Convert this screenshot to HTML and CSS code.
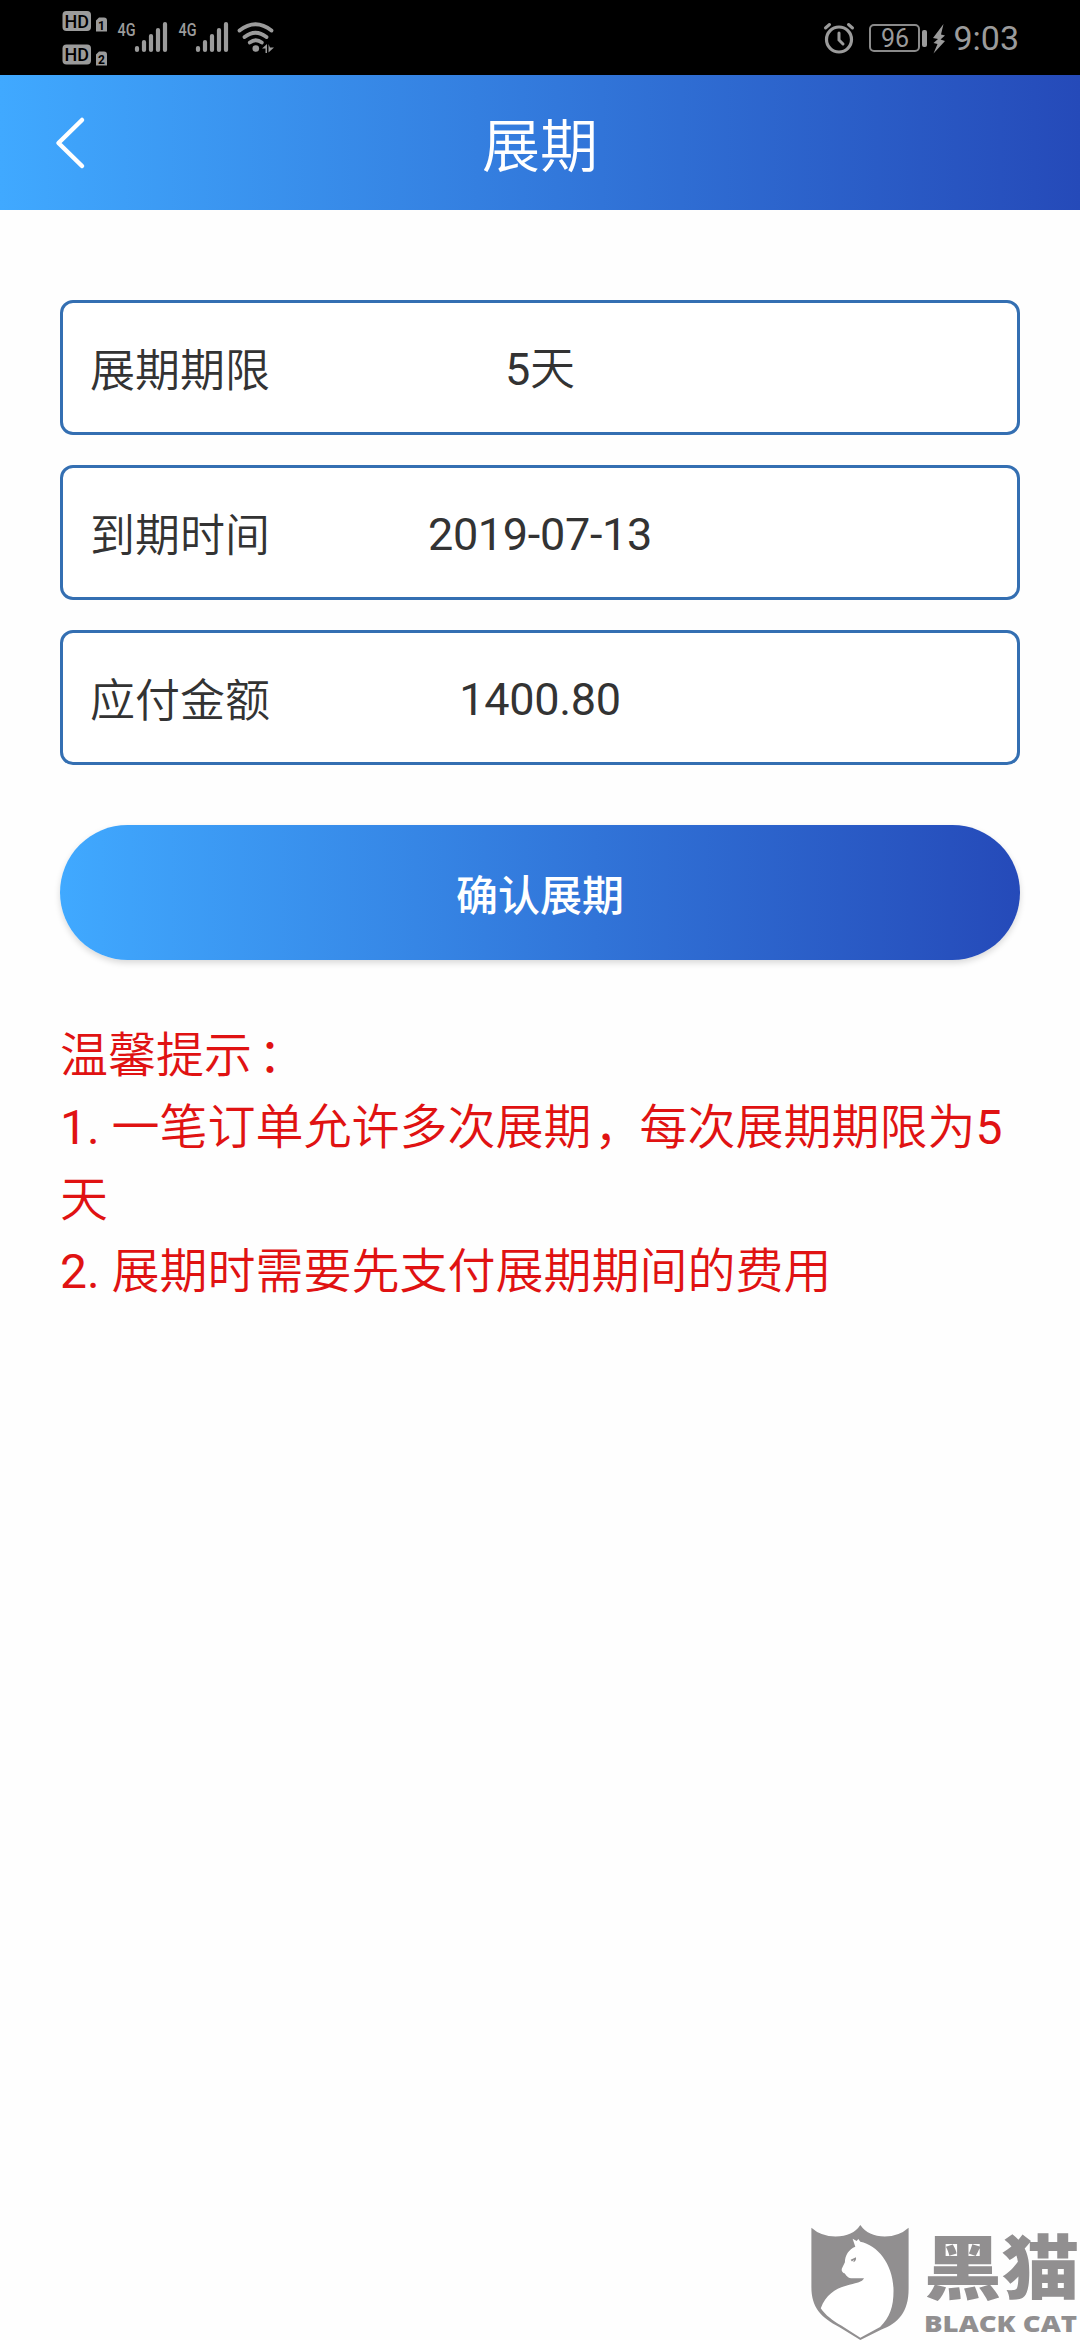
FILE: index.html
```html
<!DOCTYPE html>
<html lang="zh-CN">
<head>
<meta charset="utf-8">
<title>展期</title>
<link rel="stylesheet" href="styles.css">
</head>
<body>
<div class="screen">
  <div class="status">
    <svg class="status-left" width="216" height="75" viewBox="60 0 216 75" fill="#9b9b9b">
      <rect x="62.5" y="11" width="28.5" height="20" rx="4"/>
      <rect x="62.5" y="44.500" width="28.5" height="20" rx="4"/>
      <path d="M96 20.500l3-3h5a3 3 0 0 1 3 3v11h-11zM96 54.500l3-3h5a3 3 0 0 1 3 3v11h-11z"/>
      <g fill="#000" font-family="Roboto, sans-serif" font-weight="500">
        <text x="64.500" y="27.500" font-size="18.500" textLength="24.500" lengthAdjust="spacingAndGlyphs">HD</text>
        <text x="64.500" y="61" font-size="18.500" textLength="24.500" lengthAdjust="spacingAndGlyphs">HD</text>
        <text x="98" y="29.500" font-size="12" font-weight="700">1</text>
        <text x="98" y="63.500" font-size="12" font-weight="700">2</text>
      </g>
      <g font-family="Roboto, sans-serif" font-weight="500" font-size="19">
        <text x="117.500" y="35.500" textLength="18" lengthAdjust="spacingAndGlyphs">4G</text>
        <text x="178.500" y="35.500" textLength="18" lengthAdjust="spacingAndGlyphs">4G</text>
      </g>
      <g stroke="#9b9b9b" stroke-width="4.200" stroke-linecap="round">
        <path d="M137 48v2M144 42v8M151 36v14M158 30v20M165 24v26"/>
        <path d="M198 48v2M205 42v8M212 36v14M219 30v20M226 24v26"/>
      </g>
      <g fill="none" stroke="#9b9b9b" stroke-width="3.800" stroke-linecap="round">
        <path d="M239.500 30.500q16-12.500 32 0M244.500 37q11-8.500 22 0M249.800 42.500q6-4.500 12 0"/>
      </g>
      <circle cx="255.800" cy="48.500" r="3.300"/>
      <path d="M262 48.500l5-4.500v9h-1.500v-4.500zM268.500 44v8.500l5.500-5h-4z"/>
    </svg>
    <svg class="alarm" width="32" height="32" viewBox="823 21 32 32" fill="none" stroke="#9b9b9b" stroke-linecap="round">
      <circle cx="839" cy="38.500" r="12.500" stroke-width="3.200"/>
      <path d="M839 32v7l4 4" stroke-width="3"/>
      <path d="M825.500 27l4-3.500M852.500 27l-4-3.500" stroke-width="3"/>
    </svg>
    <span class="battery">96</span>
    <svg class="charge" width="26" height="32" viewBox="921 21 26 32" fill="#9b9b9b">
      <rect x="922" y="29" width="5" height="17" rx="2"/>
      <path d="M943.500 23l-10.500 14 5 1-4.500 4 4 1-4 9.500 11.500-12.500-4.500-1.500 4.500-4-4-1z"/>
    </svg>
    <span class="clock">9:03</span>
  </div>

  <header class="header">
    <svg class="back" width="32" height="54" viewBox="0 0 32 54" fill="none" stroke="#fff" stroke-width="4.500" stroke-linecap="round" stroke-linejoin="round"><path d="M28 4L4.500 27 28 50"/></svg>
    <h1 class="title">展期</h1>
  </header>

  <main class="content">
    <div class="fields">
      <div class="field"><span class="label">展期期限</span><span class="value"><span class="num">5</span>天</span></div>
      <div class="field"><span class="label">到期时间</span><span class="value num">2019-07-13</span></div>
      <div class="field"><span class="label">应付金额</span><span class="value num">1400.80</span></div>
    </div>
    <button class="confirm">确认展期</button>
    <div class="tips">
      <p>温馨提示<span class="colon">：</span></p>
      <p><span class="num">1. </span>一笔订单允许多次展期<span class="comma">，</span>每次展期期限为<span class="num">5</span>天</p>
      <p><span class="num">2. </span>展期时需要先支付展期期间的费用</p>
    </div>
  </main>

  <footer class="brand">
    <svg width="98" height="116" viewBox="0 0 292 346">
      <path fill="#918f90" d="M1 8Q30 34 73 34Q125 34 147 0Q170 34 220 34Q262 34 291 8V190C291 260 260 292 210 312L147 343L85 305C28 275 1 245 1 185Z"/>
      <path fill="#fff" d="M124 41L136 48L141 42L147 50C200 60 246 120 246 196C246 245 235 275 206 304L147 336L90 300C65 285 42 268 29 248C48 197 88 184 124 176C145 171 153 168 158 159H119C110 158 105 152 101 145C93 141 90 137 92 130L101 111C101 91 113 72 132 65Z"/>
      <path fill="#918f90" d="M118 104L134 96Q136 107 126 111L128 104L122 109Z"/>
    </svg>
    <div class="brand-text">
      <span class="brand-cn">黑猫</span>
      <span class="brand-en">BLACK CAT</span>
    </div>
  </footer>
</div>
</body>
</html>
```
FILE: styles.css
```css
* { box-sizing: border-box; }

body {
  margin: 0;
  background: #fefefe;
  font-family: Roboto, "Noto Sans CJK SC", sans-serif;
  color: #333;
}

.screen {
  display: flex;
  flex-direction: column;
  width: 1080px;
  height: 2340px;
  overflow: hidden;
}

.status {
  display: flex;
  align-items: center;
  height: 75px;
  padding: 0 61px 0 60px;
  background: #000;
  color: #9b9b9b;
}

.alarm { margin-left: auto; }

.battery {
  width: 51px;
  height: 28px;
  margin: 0 1px 0 14px;
  border: 2px solid #8a8a8a;
  border-radius: 5px;
  font-size: 25px;
  line-height: 25px;
  text-align: center;
}

.clock {
  margin-left: 6px;
  font-size: 34px;
  line-height: 40px;
}

.header {
  display: grid;
  grid-template-columns: 120px 1fr 120px;
  align-items: center;
  height: 135px;
  background: linear-gradient(90deg, #40a9ff, #254ab9);
}

.back { margin-left: 54px; }

.title {
  margin: 8px 0 0;
  color: #fff;
  font-size: 58px;
  font-weight: 350;
  line-height: 80px;
  text-align: center;
}

.content {
  flex: 1;
  padding: 90px 60px 0;
}

.fields {
  display: grid;
  gap: 30px;
}

.field {
  display: grid;
  grid-template-columns: 200px 1fr 200px;
  align-items: center;
  height: 135px;
  padding: 5px 27px 0;
  border: 3px solid #346fb2;
  border-radius: 13px;
  background: #fff;
  font-size: 45px;
  font-weight: 350;
  line-height: 60px;
}

.label { padding-top: 3px; }

.value { text-align: center; }

.num { font-weight: 400; }

.value .num,
.value.num { letter-spacing: -0.3px; }

.confirm {
  display: block;
  width: 100%;
  height: 135px;
  margin-top: 60px;
  padding: 0;
  border: 0;
  border-radius: 68px;
  background: linear-gradient(90deg, #40a9ff, #254ab9);
  box-shadow: 0 3px 6px rgba(0, 0, 0, 0.15);
  color: #fff;
  font-family: inherit;
  font-size: 42px;
  font-weight: 500;
}

.tips {
  margin-top: 60px;
  color: #e01212;
  font-size: 48px;
  font-weight: 350;
  line-height: 72px;
}

.tips p { margin: 0; }

.colon { padding-left: 6px; }

.comma {
  margin-right: -3px;
  padding-left: 3px;
}

.brand {
  display: flex;
  align-items: flex-start;
  height: 116px;
  margin: 0 0 -1px 811px;
  color: #918f90;
}

.brand-text {
  display: flex;
  flex-direction: column;
  margin-left: 15px;
  white-space: nowrap;
}

.brand-cn {
  height: 86px;
  font-family: "Noto Sans CJK SC", sans-serif;
  font-size: 70px;
  font-weight: 900;
  line-height: 78px;
  transform: scaleX(1.11);
  transform-origin: left top;
}

.brand-en {
  font-family: "Open Sans", sans-serif;
  font-size: 23px;
  font-weight: 800;
  line-height: 24px;
  transform: scaleX(1.2);
  transform-origin: left top;
}
```
